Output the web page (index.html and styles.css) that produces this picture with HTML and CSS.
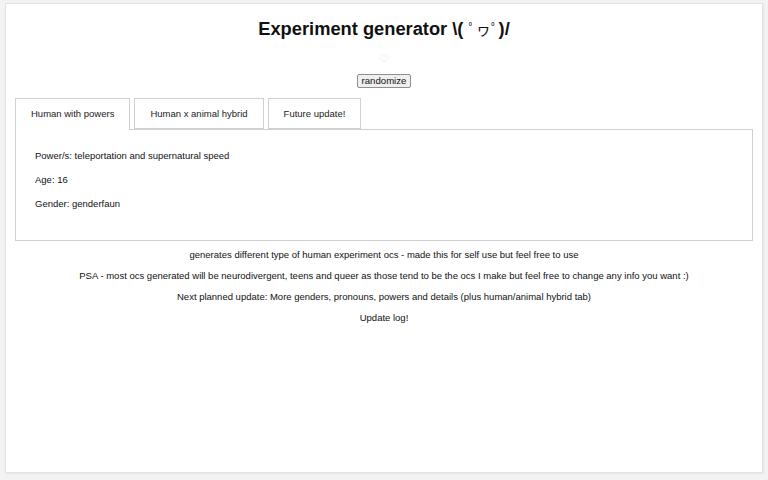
FILE: index.html
```html
<!DOCTYPE html>
<html>
<head>
<meta charset="utf-8">
<title>Experiment generator</title>
<link rel="stylesheet" href="styles.css">
</head>
<body>
<div class="page">
  <h1 class="title">Experiment generator \( <span class="kao">ﾟヮﾟ</span>)/</h1>
  <div class="faint">♡</div>
  <div class="btn-row"><button class="btn">randomize</button></div>
  <div class="tabs">
    <div class="tab active">Human with powers</div>
    <div class="tab">Human x animal hybrid</div>
    <div class="tab">Future update!</div>
  </div>
  <div class="panel">
    <p>Power/s: teleportation and supernatural speed</p>
    <p>Age: 16</p>
    <p>Gender: genderfaun</p>
  </div>
  <div class="notes">
    <p>generates different type of human experiment ocs - made this for self use but feel free to use</p>
    <p>PSA - most ocs generated will be neurodivergent, teens and queer as those tend to be the ocs I make but feel free to change any info you want :)</p>
    <p>Next planned update: More genders, pronouns, powers and details (plus human/animal hybrid tab)</p>
    <p>Update log!</p>
  </div>
</div>
</body>
</html>
```

FILE: styles.css
```css
html, body {
  margin: 0;
  padding: 0;
  background: #f3f3f3;
}
body {
  padding: 3px 5px 4px 5px;
  font-family: "Liberation Sans", Arial, "Noto Sans CJK JP", sans-serif;
  color: #111;
}
.page {
  background: #fff;
  border: 1px solid #e2e2e2;
  box-shadow: 1px 1px 2px rgba(0,0,0,0.06);
  height: 470px;
  box-sizing: border-box;
  padding: 12px 9px 0 9px;
  display: flex;
  flex-direction: column;
}
.title {
  margin: 0;
  text-align: center;
  font-size: 18.3px;
  font-weight: bold;
  line-height: 26px;
  height: 26px;
  overflow: visible;
  color: #111;
}
.kao {
  font-size: 15px;
  font-weight: normal;
  line-height: 1;
}
.faint {
  text-align: center;
  font-size: 9px;
  color: #e6e6e6;
  margin-top: 11px;
  line-height: 12px;
}
.btn-row {
  display: flex;
  justify-content: center;
  margin-top: 9px;
}
.btn {
  font-family: "Liberation Sans", Arial, sans-serif;
  font-size: 9.6px;
  line-height: 12px;
  padding: 0 4px;
  background: #efefef;
  border: 1px solid #8f8f8f;
  border-radius: 2px;
  color: #111;
}
.tabs {
  display: flex;
  gap: 4px;
  margin-top: 10px;
  position: relative;
  z-index: 1;
}
.tab {
  font-size: 9.5px;
  line-height: 29px;
  padding: 0 15px;
  box-sizing: border-box;
  border: 1px solid #d0d0d0;
  border-bottom: none;
  background: #fff;
  color: #222;
  height: 31px;
}
.tab.active {
  height: 32px;
  margin-bottom: -1px;
}
.tab:not(.active) {
  border-bottom: 1px solid #d0d0d0;
}
.panel {
  border: 1px solid #d0d0d0;
  height: 112px;
  box-sizing: border-box;
  padding: 20px 19px;
  font-size: 9.5px;
  color: #111;
}
.panel p {
  margin: 0 0 12px 0;
  line-height: 12px;
}
.notes {
  text-align: center;
  font-size: 9.5px;
  color: #111;
  margin-top: 8px;
}
.notes p {
  margin: 0 0 9px 0;
  line-height: 12px;
}
```
